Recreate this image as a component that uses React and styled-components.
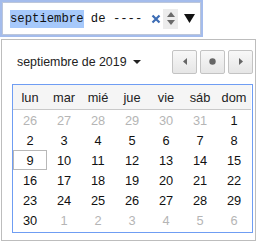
import React from "react";
import styled, { createGlobalStyle } from "styled-components";

const Global = createGlobalStyle`
  html, body { margin: 0; padding: 0; background: #fff; }
  body { font-family: "Liberation Sans", Arial, sans-serif; }
`;

const Page = styled.div`
  width: 265px;
  height: 244px;
  display: flex;
  flex-direction: column;
  align-items: flex-start;
  gap: 2px;
`;

const Field = styled.div`
  box-sizing: border-box;
  width: 203px;
  height: 37px;
  border: 2px solid #a4bcec;
  box-shadow: inset 0 0 0 1px #bcc6da;
  display: flex;
  align-items: center;
  padding-left: 8px;
  font-family: "Liberation Mono", "DejaVu Sans Mono", monospace;
  font-size: 12.25px;
  color: #111;
`;

const Seg = styled.span`
  background: ${(p) => (p.$sel ? "#a6c9fb" : "transparent")};
  padding: 2px 0;
  white-space: pre;
`;

const ClearX = styled.span`
  margin-left: 9px;
  display: flex;
  align-items: center;
`;

const Spin = styled.span`
  width: 15px;
  height: 20px;
  background: #ececec;
  display: flex;
  flex-direction: column;
  align-items: center;
  justify-content: center;
  gap: 3px;
  margin-left: 2px;
`;

const Drop = styled.span`
  margin-left: 6px;
  display: flex;
  align-items: center;
`;

const Popup = styled.div`
  box-sizing: border-box;
  margin-left: 1px;
  width: 255px;
  height: 202px;
  border: 1px solid #bdbdbd;
  background: #fff;
  display: flex;
  flex-direction: column;
  padding: 9px 2px 0 10px;
`;

const HeaderBar = styled.div`
  display: flex;
  align-items: center;
  justify-content: space-between;
  height: 25px;
  margin-bottom: 10px;
`;

const MonthLabel = styled.div`
  display: flex;
  align-items: center;
  gap: 6px;
  padding-left: 5px;
  font-size: 12.4px;
  color: #222;
`;

const Nav = styled.div`
  display: flex;
  gap: 3px;
`;

const NavButton = styled.button`
  box-sizing: border-box;
  width: 25px;
  height: 24px;
  padding: 0;
  border: 1px solid #c3c3c3;
  border-radius: 2px;
  background: linear-gradient(#f8f8f8, #e6e6e6);
  display: flex;
  align-items: center;
  justify-content: center;
`;

const Table = styled.div`
  box-sizing: border-box;
  width: 241px;
  border: 1px solid #6f9df3;
  display: grid;
  grid-template-columns: repeat(7, 34px);
  grid-template-rows: 25px;
  grid-auto-rows: 20px;
  padding-bottom: 2px;
`;

const HeadCell = styled.div`
  box-sizing: border-box;
  height: 25px;
  background: #f5f5f5;
  border-bottom: 1px solid #c9c9c9;
  display: flex;
  align-items: center;
  justify-content: center;
  font-size: 12.8px;
  color: #222;
`;

const DayCell = styled.div`
  box-sizing: border-box;
  display: flex;
  align-items: center;
  justify-content: center;
  font-size: 12.8px;
  color: ${(p) => (p.$out ? "#b5b5b5" : "#111")};
  border: 1px solid ${(p) => (p.$today ? "#b8b8b8" : "transparent")};
`;

const days = ["lun", "mar", "mié", "jue", "vie", "sáb", "dom"];
const cells = [
  ...[26, 27, 28, 29, 30, 31].map((d) => ({ d, out: true })),
  ...Array.from({ length: 30 }, (_, i) => ({ d: i + 1, out: false })),
  ...[1, 2, 3, 4, 5, 6].map((d) => ({ d, out: true })),
];

export default function App() {
  return (
    <>
      <Global />
      <Page>
        <Field>
          <Seg $sel>septiembre</Seg>
          <Seg> de ----</Seg>
          <ClearX>
            <svg width="10" height="10" viewBox="0 0 10 10">
              <path d="M1.5 1.5 L8.5 8.5 M8.5 1.5 L1.5 8.5" stroke="#3d6db5" strokeWidth="2.2" />
            </svg>
          </ClearX>
          <Spin>
            <svg width="8" height="5" viewBox="0 0 8 5">
              <path d="M0 5 L4 0 L8 5 Z" fill="#6b6b6b" />
            </svg>
            <svg width="8" height="5" viewBox="0 0 8 5">
              <path d="M0 0 L4 5 L8 0 Z" fill="#6b6b6b" />
            </svg>
          </Spin>
          <Drop>
            <svg width="11" height="9" viewBox="0 0 11 9">
              <path d="M0 0 L11 0 L5.5 9 Z" fill="#111" />
            </svg>
          </Drop>
        </Field>
        <Popup>
          <HeaderBar>
            <MonthLabel>
              <span>septiembre de 2019</span>
              <svg width="8" height="4" viewBox="0 0 8 4">
                <path d="M0 0 L8 0 L4 4 Z" fill="#222" />
              </svg>
            </MonthLabel>
            <Nav>
              <NavButton aria-label="prev">
                <svg width="4" height="7" viewBox="0 0 4 7">
                  <path d="M4 0 L0 3.5 L4 7 Z" fill="#666" />
                </svg>
              </NavButton>
              <NavButton aria-label="today">
                <svg width="7" height="7" viewBox="0 0 7 7">
                  <circle cx="3.5" cy="3.5" r="3.2" fill="#666" />
                </svg>
              </NavButton>
              <NavButton aria-label="next">
                <svg width="4" height="7" viewBox="0 0 4 7">
                  <path d="M0 0 L4 3.5 L0 7 Z" fill="#666" />
                </svg>
              </NavButton>
            </Nav>
          </HeaderBar>
          <Table>
            {days.map((d) => (
              <HeadCell key={d}>{d}</HeadCell>
            ))}
            {cells.map((c, i) => (
              <DayCell key={i} $out={c.out} $today={!c.out && c.d === 9}>
                {c.d}
              </DayCell>
            ))}
          </Table>
        </Popup>
      </Page>
    </>
  );
}
